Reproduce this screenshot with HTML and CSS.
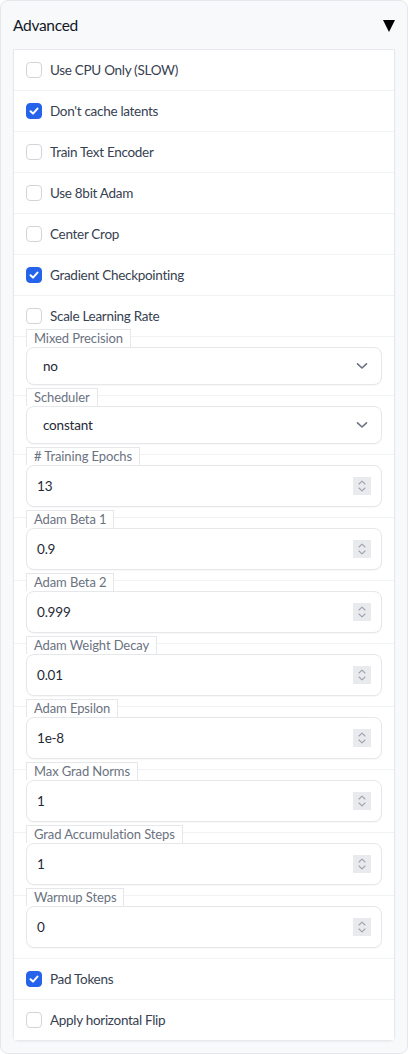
FILE: index.html
```html
<!DOCTYPE html>
<html>
<head>
<meta charset="utf-8">
<link rel="stylesheet" href="styles.css">
</head>
<body>
<div class="accordion">
  <div class="acc-header">
    <span class="acc-title">Advanced</span>
    <svg class="acc-caret" width="12" height="12" viewBox="0 0 12 12"><polygon points="0,0 12,0 6,12" fill="#000"/></svg>
  </div>
  <div class="form">
    <label class="check-row"><span class="box"></span><span class="check-label">Use CPU Only (SLOW)</span></label>
    <label class="check-row"><span class="box on"><svg viewBox="0 0 16 16" width="16" height="16"><path d="M4.5 8.3 L7 10.6 L11.5 5.6" fill="none" stroke="#fff" stroke-width="2" stroke-linecap="round" stroke-linejoin="round"/></svg></span><span class="check-label">Don't cache latents</span></label>
    <label class="check-row"><span class="box"></span><span class="check-label">Train Text Encoder</span></label>
    <label class="check-row"><span class="box"></span><span class="check-label">Use 8bit Adam</span></label>
    <label class="check-row"><span class="box"></span><span class="check-label">Center Crop</span></label>
    <label class="check-row"><span class="box on"><svg viewBox="0 0 16 16" width="16" height="16"><path d="M4.5 8.3 L7 10.6 L11.5 5.6" fill="none" stroke="#fff" stroke-width="2" stroke-linecap="round" stroke-linejoin="round"/></svg></span><span class="check-label">Gradient Checkpointing</span></label>
    <label class="check-row"><span class="box"></span><span class="check-label">Scale Learning Rate</span></label>

    <div class="field">
      <span class="field-label">Mixed Precision</span>
      <div class="select"><span class="value">no</span><svg class="chev" width="12" height="8" viewBox="0 0 12 8"><path d="M1.5 1.8 L6 6 L10.5 1.8" fill="none" stroke="#6b7280" stroke-width="1.6" stroke-linecap="round" stroke-linejoin="round"/></svg></div>
    </div>
    <div class="field">
      <span class="field-label">Scheduler</span>
      <div class="select"><span class="value">constant</span><svg class="chev" width="12" height="8" viewBox="0 0 12 8"><path d="M1.5 1.8 L6 6 L10.5 1.8" fill="none" stroke="#6b7280" stroke-width="1.6" stroke-linecap="round" stroke-linejoin="round"/></svg></div>
    </div>

    <div class="field">
      <span class="field-label"># Training Epochs</span>
      <div class="number"><span class="value">13</span><span class="spin"><svg width="18" height="18" viewBox="0 0 18 18"><path d="M6 7 L9 4.2 L12 7 M6 11 L9 13.8 L12 11" fill="none" stroke="#9ca3af" stroke-width="1.1" stroke-linecap="round" stroke-linejoin="round"/></svg></span></div>
    </div>
    <div class="field">
      <span class="field-label">Adam Beta 1</span>
      <div class="number"><span class="value">0.9</span><span class="spin"><svg width="18" height="18" viewBox="0 0 18 18"><path d="M6 7 L9 4.2 L12 7 M6 11 L9 13.8 L12 11" fill="none" stroke="#9ca3af" stroke-width="1.1" stroke-linecap="round" stroke-linejoin="round"/></svg></span></div>
    </div>
    <div class="field">
      <span class="field-label">Adam Beta 2</span>
      <div class="number"><span class="value">0.999</span><span class="spin"><svg width="18" height="18" viewBox="0 0 18 18"><path d="M6 7 L9 4.2 L12 7 M6 11 L9 13.8 L12 11" fill="none" stroke="#9ca3af" stroke-width="1.1" stroke-linecap="round" stroke-linejoin="round"/></svg></span></div>
    </div>
    <div class="field">
      <span class="field-label">Adam Weight Decay</span>
      <div class="number"><span class="value">0.01</span><span class="spin"><svg width="18" height="18" viewBox="0 0 18 18"><path d="M6 7 L9 4.2 L12 7 M6 11 L9 13.8 L12 11" fill="none" stroke="#9ca3af" stroke-width="1.1" stroke-linecap="round" stroke-linejoin="round"/></svg></span></div>
    </div>
    <div class="field">
      <span class="field-label">Adam Epsilon</span>
      <div class="number"><span class="value">1e-8</span><span class="spin"><svg width="18" height="18" viewBox="0 0 18 18"><path d="M6 7 L9 4.2 L12 7 M6 11 L9 13.8 L12 11" fill="none" stroke="#9ca3af" stroke-width="1.1" stroke-linecap="round" stroke-linejoin="round"/></svg></span></div>
    </div>
    <div class="field">
      <span class="field-label">Max Grad Norms</span>
      <div class="number"><span class="value">1</span><span class="spin"><svg width="18" height="18" viewBox="0 0 18 18"><path d="M6 7 L9 4.2 L12 7 M6 11 L9 13.8 L12 11" fill="none" stroke="#9ca3af" stroke-width="1.1" stroke-linecap="round" stroke-linejoin="round"/></svg></span></div>
    </div>
    <div class="field">
      <span class="field-label">Grad Accumulation Steps</span>
      <div class="number"><span class="value">1</span><span class="spin"><svg width="18" height="18" viewBox="0 0 18 18"><path d="M6 7 L9 4.2 L12 7 M6 11 L9 13.8 L12 11" fill="none" stroke="#9ca3af" stroke-width="1.1" stroke-linecap="round" stroke-linejoin="round"/></svg></span></div>
    </div>
    <div class="field">
      <span class="field-label">Warmup Steps</span>
      <div class="number"><span class="value">0</span><span class="spin"><svg width="18" height="18" viewBox="0 0 18 18"><path d="M6 7 L9 4.2 L12 7 M6 11 L9 13.8 L12 11" fill="none" stroke="#9ca3af" stroke-width="1.1" stroke-linecap="round" stroke-linejoin="round"/></svg></span></div>
    </div>

    <label class="check-row"><span class="box on"><svg viewBox="0 0 16 16" width="16" height="16"><path d="M4.5 8.3 L7 10.6 L11.5 5.6" fill="none" stroke="#fff" stroke-width="2" stroke-linecap="round" stroke-linejoin="round"/></svg></span><span class="check-label">Pad Tokens</span></label>
    <label class="check-row"><span class="box"></span><span class="check-label">Apply horizontal Flip</span></label>
  </div>
</div>
</body>
</html>
```
FILE: styles.css
```css
* { box-sizing: border-box; }
html, body {
  margin: 0;
  padding: 0;
  background: #ffffff;
}
body {
  font-family: "Source Sans Pro", Lato, "Noto Sans", sans-serif;
  width: 408px;
  height: 1054px;
}
.accordion {
  width: 408px;
  height: 1054px;
  border: 1px solid #e5e7eb;
  border-radius: 8px;
  background: #f8f9fb;
  padding: 12px;
  display: flex;
  flex-direction: column;
}
.acc-header {
  height: 24px;
  margin-bottom: 12px;
  display: flex;
  align-items: center;
  justify-content: space-between;
}
.acc-title {
  font-size: 15.5px;
  letter-spacing: -0.3px;
  color: #111827;
  line-height: 24px;
}
.acc-caret {
  margin-right: 0;
  margin-top: 1px;
}
.form {
  display: flex;
  flex-direction: column;
  gap: 1px;
  background: #f1f2f4;
  border: 1px solid #e7e9ec;
  border-radius: 0 0 6px 6px;
  box-shadow: 0 1px 2px rgba(0,0,0,0.05);
}
.check-row {
  height: 40px;
  background: #fff;
  display: flex;
  align-items: center;
  gap: 8px;
  padding: 0 12px;
}
.box {
  width: 16px;
  height: 16px;
  border: 1px solid #d1d5db;
  border-radius: 4px;
  background: #fff;
  flex: none;
  display: flex;
}
.box.on {
  border-color: #2563eb;
  background: #2563eb;
}
.box svg { margin: -1px; }
.check-label {
  font-size: 13.5px;
  letter-spacing: -0.3px;
  color: #374151;
  margin-top: -1px;
}
.field {
  background: #fff;
  padding: 0 12px 10px;
  display: flex;
  flex-direction: column;
  align-items: stretch;
}
.field-label {
  align-self: flex-start;
  position: relative;
  margin-top: -8px;
  height: 18px;
  padding: 0 7px;
  border: 1px solid #e5e7eb;
  border-bottom: none;
  background: #fff;
  font-size: 13px;
  letter-spacing: -0.1px;
  line-height: 16px;
  color: #6b7280;
}
.select {
  height: 38px;
  border: 1px solid #e5e7eb;
  border-radius: 8px;
  background: #fff;
  display: flex;
  align-items: center;
  justify-content: space-between;
  padding: 0 13px 0 16px;
  box-shadow: 0 1px 1px rgba(0,0,0,0.03);
}
.number {
  height: 42px;
  border: 1px solid #e5e7eb;
  border-radius: 8px;
  background: #fff;
  display: flex;
  align-items: center;
  justify-content: space-between;
  padding: 0 10px 0 10px;
  box-shadow: 0 1px 1px rgba(0,0,0,0.03);
}
.value {
  font-size: 13.5px;
  letter-spacing: -0.2px;
  color: #1f2937;
}
.spin {
  width: 18px;
  height: 18px;
  background: #e9eaed;
  display: flex;
}
.chev { display: block; }
```
